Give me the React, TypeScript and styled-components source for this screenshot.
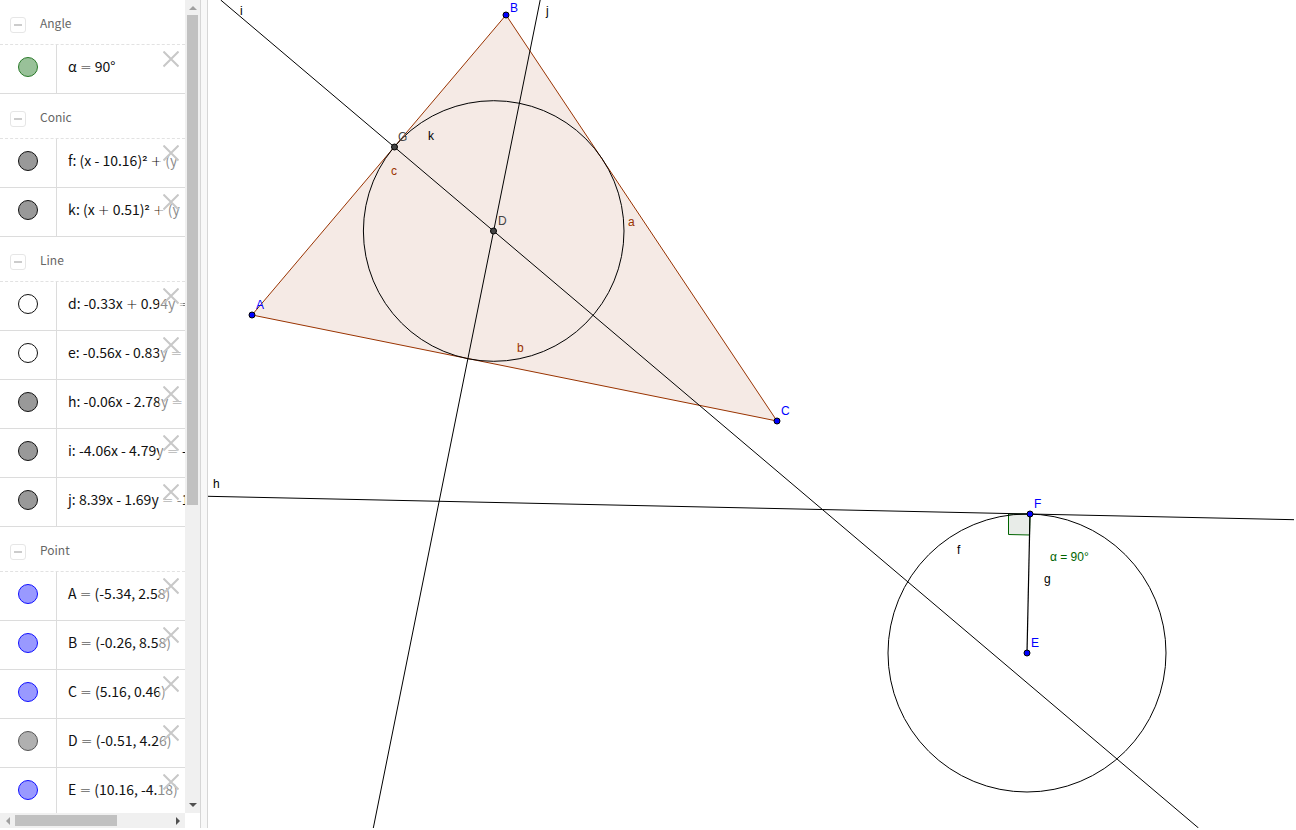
import React, { useState } from 'react';
import styled, { createGlobalStyle } from 'styled-components';

const GlobalStyle = createGlobalStyle`
  *, *::before, *::after { box-sizing: border-box; }
  body { margin: 0; background: #fff; }
`;

const listFont = '"Noto Sans CJK SC", "Noto Sans", sans-serif';

type Tone = 'green' | 'black' | 'blue' | 'gray' | 'hidden';

const tones: Record<Tone, { line: string; fill: string }> = {
  green: { line: '#2a7a2a', fill: '#99c199' },
  black: { line: '#111', fill: '#999' },
  blue: { line: '#1010ff', fill: '#9999ff' },
  gray: { line: '#555', fill: '#b0b0b0' },
  hidden: { line: '#111', fill: '#fff' },
};

interface Item {
  name: string;
  text: string;
  tone: Tone;
}

const groups: { title: string; items: Item[] }[] = [
  { title: 'Angle', items: [{ name: 'α', text: 'α = 90°', tone: 'green' }] },
  {
    title: 'Conic',
    items: [
      { name: 'f', text: 'f: (x - 10.16)² + (y', tone: 'black' },
      { name: 'k', text: 'k: (x + 0.51)² + (y', tone: 'black' },
    ],
  },
  {
    title: 'Line',
    items: [
      { name: 'd', text: 'd: -0.33x + 0.94y =', tone: 'hidden' },
      { name: 'e', text: 'e: -0.56x - 0.83y = -', tone: 'hidden' },
      { name: 'h', text: 'h: -0.06x - 2.78y =', tone: 'black' },
      { name: 'i', text: 'i: -4.06x - 4.79y = -', tone: 'black' },
      { name: 'j', text: 'j: 8.39x - 1.69y = -1', tone: 'black' },
    ],
  },
  {
    title: 'Point',
    items: [
      { name: 'A', text: 'A = (-5.34, 2.58)', tone: 'blue' },
      { name: 'B', text: 'B = (-0.26, 8.58)', tone: 'blue' },
      { name: 'C', text: 'C = (5.16, 0.46)', tone: 'blue' },
      { name: 'D', text: 'D = (-0.51, 4.26)', tone: 'gray' },
      { name: 'E', text: 'E = (10.16, -4.18)', tone: 'blue' },
    ],
  },
];

const Page = styled.div`
  display: flex;
  height: 100vh;
  padding: 0 2px 2px 0;
  overflow: hidden;
`;

const Sidebar = styled.aside`
  display: grid;
  grid-template-columns: 185px 15px;
  grid-template-rows: minmax(0, 1fr) 15px;
  flex: none;
`;

const List = styled.div`
  overflow: hidden;
  font-family: ${listFont};
`;

const GroupHeader = styled.h2`
  display: flex;
  align-items: center;
  gap: 14px;
  height: 45px;
  margin: 0;
  padding: 3px 0 0 10px;
  border-bottom: 1px dashed #e2e2e2;
  color: #666;
  font-size: 12px;
  font-weight: 400;
  line-height: 16px;
`;

const GroupTitle = styled.span`
  height: 18px;
`;

const Toggle = styled.button`
  display: grid;
  place-items: center;
  width: 16px;
  height: 16px;
  margin-top: 2px;
  padding: 0;
  border: 1px solid #e6e6e6;
  border-radius: 3px;
  background: #fff;
`;

const Minus = styled.span`
  width: 8px;
  height: 2px;
  background: #ccc;
`;

const Row = styled.div`
  display: grid;
  grid-template-columns: 57px minmax(0, 1fr);
  height: 49px;
  border-bottom: 1px solid #dcdcdc;
`;

const MarbleCell = styled.div`
  display: grid;
  place-items: center;
  padding-bottom: 4px;
  border-right: 1px solid #dcdcdc;
`;

const Marble = styled.button<{ $tone: Tone }>`
  width: 20px;
  height: 20px;
  padding: 0;
  border: 1px solid ${p => tones[p.$tone].line};
  border-radius: 50%;
  background: ${p => tones[p.$tone].fill};
`;

const Formula = styled.div`
  position: relative;
  overflow: hidden;
  padding-left: 11px;
  color: #111;
  font-size: 14px;
  line-height: 42px;
  white-space: pre;
`;

const Operator = styled.span`
  font-family: "DejaVu Sans Light", "DejaVu Sans", sans-serif;
  font-weight: 200;
  line-height: 20px;
`;

const Power = styled.span`
  font-family: Roboto, sans-serif;
  line-height: 20px;
`;

const Remove = styled.button`
  position: absolute;
  top: 2px;
  right: 2px;
  width: 24px;
  height: 32px;
  padding: 4px;
  border: 0;
  background: rgba(255, 255, 255, 0.5);
`;

const RemoveIcon = styled.svg`
  display: block;
`;

const Track = styled.div<{ $vertical?: boolean }>`
  display: flex;
  flex-direction: ${p => (p.$vertical ? 'column' : 'row')};
  align-items: center;
  background: #f0f0f0;
`;

const Arrow = styled.button`
  display: grid;
  place-items: center;
  flex: none;
  width: 15px;
  height: 15px;
  padding: 0;
  border: 0;
  background: none;
`;

const Rail = styled.div<{ $vertical?: boolean }>`
  flex: 1;
  ${p => (p.$vertical ? 'width: 11px;' : 'height: 11px;')}
`;

const Thumb = styled.div<{ $vertical?: boolean }>`
  width: ${p => (p.$vertical ? '100%' : '66%')};
  height: ${p => (p.$vertical ? '62.6%' : '100%')};
  background: #c1c1c1;
`;

const Splitter = styled.div`
  flex: none;
  width: 8px;
  border: solid #d6d6d6;
  border-width: 0 1px;
  background: #f8f8f8;
`;

const Canvas = styled.main`
  flex: 1;
  min-width: 0;
`;

const Drawing = styled.svg`
  display: block;
  width: 100%;
  height: 100%;
  font: 12px "Liberation Sans", Arial, sans-serif;
`;

const arrows = {
  up: 'M0 5 L4 1 L8 5 Z',
  down: 'M0 0 L4 4 L8 0 Z',
  left: 'M5 0 L1 4 L5 8 Z',
  right: 'M1 0 L5 4 L1 8 Z',
};

function ScrollArrow({ to, color = '#505050' }: { to: keyof typeof arrows; color?: string }) {
  const tall = to === 'left' || to === 'right';
  return (
    <Arrow type="button" aria-label={`Scroll ${to}`}>
      <svg width={tall ? 6 : 8} height={tall ? 8 : 6}>
        <path d={arrows[to]} fill={color} />
      </svg>
    </Arrow>
  );
}

function Expression({ text }: { text: string }) {
  return (
    <>
      {text.split(/([=+²])/).map((part, i) => {
        if (part === '²') return <Power key={i}>{part}</Power>;
        if (part === '=' || part === '+') return <Operator key={i}>{part}</Operator>;
        return part;
      })}
    </>
  );
}

function Group({ title, items }: { title: string; items: Item[] }) {
  const [open, setOpen] = useState(true);
  return (
    <section>
      <GroupHeader>
        <Toggle type="button" aria-label={`Toggle ${title}`} aria-expanded={open} onClick={() => setOpen(!open)}>
          <Minus />
        </Toggle>
        <GroupTitle>{title}</GroupTitle>
      </GroupHeader>
      {open &&
        items.map(item => (
          <Row key={item.name}>
            <MarbleCell>
              <Marble type="button" $tone={item.tone} aria-label={`Show or hide ${item.name}`} />
            </MarbleCell>
            <Formula>
              <Expression text={item.text} />
              <Remove type="button" aria-label={`Delete ${item.name}`}>
                <RemoveIcon width="16" height="24" viewBox="0 0 16 24">
                  <path d="M0.5 0.5 L15.5 15.5 M15.5 0.5 L0.5 15.5" stroke="#c8c8c8" strokeWidth="2" />
                </RemoveIcon>
              </Remove>
            </Formula>
          </Row>
        ))}
    </section>
  );
}

const points = [
  { name: 'A', x: 252, y: 315, lx: 256, ly: 309, fill: '#0000ff' },
  { name: 'B', x: 506, y: 15, lx: 510, ly: 12, fill: '#0000ff' },
  { name: 'C', x: 777, y: 421, lx: 781, ly: 415, fill: '#0000ff' },
  { name: 'D', x: 493.5, y: 231, lx: 498, ly: 225, fill: '#444444' },
  { name: 'G', x: 394.5, y: 147, lx: 398, ly: 141, fill: '#444444' },
  { name: 'E', x: 1027, y: 653, lx: 1031, ly: 647, fill: '#0000ff' },
  { name: 'F', x: 1030, y: 514, lx: 1034, ly: 508, fill: '#0000ff' },
];

const labels = [
  { text: 'i', x: 240, y: 15, fill: '#000' },
  { text: 'j', x: 546, y: 15, fill: '#000' },
  { text: 'k', x: 428, y: 140, fill: '#000' },
  { text: 'h', x: 213, y: 488, fill: '#000' },
  { text: 'f', x: 957, y: 554, fill: '#000' },
  { text: 'g', x: 1044, y: 583, fill: '#000' },
  { text: 'a', x: 628, y: 226, fill: '#993300' },
  { text: 'b', x: 517, y: 352, fill: '#993300' },
  { text: 'c', x: 391, y: 175, fill: '#993300' },
  { text: 'α = 90°', x: 1050, y: 561, fill: '#006400' },
];

function Geometry() {
  return (
    <Drawing role="img" aria-label="Triangle with incircle and a tangent line">
      <g transform="translate(-208 0)" fill="none" stroke="#000" strokeWidth="1">
        <path d="M252 315 L506 15 L777 421 Z" fill="#993300" fillOpacity="0.1" stroke="#993300" />
        <path d="M1008.5 514 V534.5 L1029.5 535 L1030 514 Z" fill="#224422" fillOpacity="0.1" stroke="#006400" />
        <circle cx="493.7" cy="231" r="130.3" />
        <circle cx="1027" cy="653" r="139" />
        <path d="M220.7 0 L1198.5 828" />
        <path d="M540.2 0 L373.3 828" />
        <path d="M208 496.3 L1294 519.7" />
        <path d="M1027 653 L1030 514" strokeWidth="1.2" />
        {points.map(p => (
          <circle key={p.name} cx={p.x} cy={p.y} r="3" fill={p.fill} />
        ))}
        <g stroke="none">
          {points.map(p => (
            <text key={p.name} x={p.lx} y={p.ly} fill={p.fill}>{p.name}</text>
          ))}
          {labels.map(l => (
            <text key={l.text} x={l.x} y={l.y} fill={l.fill}>{l.text}</text>
          ))}
        </g>
      </g>
    </Drawing>
  );
}

export default function App() {
  return (
    <Page>
      <GlobalStyle />
      <Sidebar>
        <List>
          {groups.map(g => (
            <Group key={g.title} {...g} />
          ))}
        </List>
        <Track $vertical>
          <ScrollArrow to="up" color="#a0a0a0" />
          <Rail $vertical>
            <Thumb $vertical />
          </Rail>
          <ScrollArrow to="down" />
        </Track>
        <Track>
          <ScrollArrow to="left" color="#a0a0a0" />
          <Rail>
            <Thumb />
          </Rail>
          <ScrollArrow to="right" />
        </Track>
      </Sidebar>
      <Splitter />
      <Canvas>
        <Geometry />
      </Canvas>
    </Page>
  );
}
